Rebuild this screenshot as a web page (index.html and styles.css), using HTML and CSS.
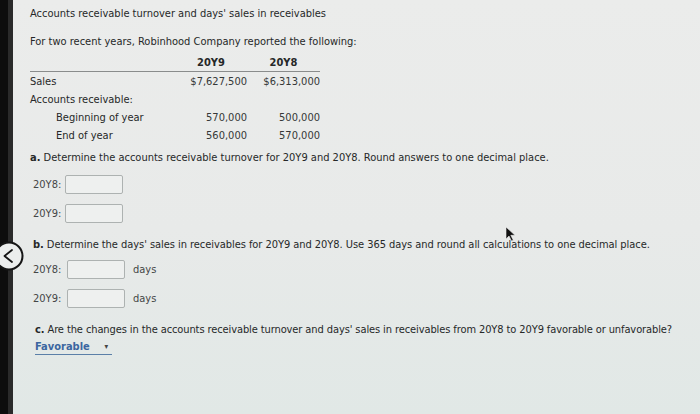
FILE: index.html
```html
<!DOCTYPE html>
<html>
<head>
<meta charset="utf-8">
<link rel="stylesheet" href="styles.css">
</head>
<body>
<div class="screen">
  <div class="bezel"></div>
  <main class="content">
    <h1 class="title">Accounts receivable turnover and days' sales in receivables</h1>
    <p class="intro">For two recent years, Robinhood Company reported the following:</p>
    <div class="table">
      <div class="row head">
        <span class="label"></span>
        <span class="num">20Y9</span>
        <span class="num">20Y8</span>
      </div>
      <div class="row">
        <span class="label">Sales</span>
        <span class="num r">$7,627,500</span>
        <span class="num r">$6,313,000</span>
      </div>
      <div class="row">
        <span class="label">Accounts receivable:</span>
        <span class="num"></span>
        <span class="num"></span>
      </div>
      <div class="row">
        <span class="label indent">Beginning of year</span>
        <span class="num r">570,000</span>
        <span class="num r">500,000</span>
      </div>
      <div class="row">
        <span class="label indent">End of year</span>
        <span class="num r">560,000</span>
        <span class="num r">570,000</span>
      </div>
    </div>

    <p class="q qa"><b>a.</b> Determine the accounts receivable turnover for 20Y9 and 20Y8. Round answers to one decimal place.</p>
    <div class="answer a1"><span class="yr">20Y8:</span><span class="box"></span></div>
    <div class="answer a2"><span class="yr">20Y9:</span><span class="box"></span></div>

    <p class="q qb"><b>b.</b> Determine the days' sales in receivables for 20Y9 and 20Y8. Use 365 days and round all calculations to one decimal place.</p>
    <div class="answer b1"><span class="yr">20Y8:</span><span class="box"></span><span class="unit">days</span></div>
    <div class="answer b2"><span class="yr">20Y9:</span><span class="box"></span><span class="unit">days</span></div>

    <p class="q qc"><b>c.</b> Are the changes in the accounts receivable turnover and days' sales in receivables from 20Y8 to 20Y9 favorable or unfavorable?</p>
    <div class="select"><span class="sel-text">Favorable</span><span class="caret">&#9662;</span></div>
  </main>
  <div class="back-btn">
    <svg width="30" height="30" viewBox="0 0 30 30"><circle cx="15" cy="15" r="13.5" fill="#eceeed" stroke="#151515" stroke-width="2"/><path d="M18 9 L10.5 15 L18 21" fill="none" stroke="#151515" stroke-width="1.8" stroke-linecap="round" stroke-linejoin="round"/></svg>
  </div>
  <div class="cursor">
    <svg width="12" height="16" viewBox="0 0 12 16"><path d="M1 1 L1 13 L4 10 L6.5 15 L8.3 14.2 L5.8 9.3 L10 9.3 Z" fill="#111" stroke="#eee" stroke-width="0.6"/></svg>
  </div>
</div>
</body>
</html>
```

FILE: styles.css
```css
* { box-sizing: border-box; }
html, body { margin: 0; padding: 0; }
body {
  width: 700px;
  height: 414px;
  overflow: hidden;
  font-family: "DejaVu Sans Condensed", "DejaVu Sans", sans-serif;
  font-size: 11px;
  color: #262828;
}
.screen {
  position: relative;
  display: flex;
  width: 700px;
  height: 414px;
  background: linear-gradient(180deg, #ebeceb 0%, #e8eae9 55%, #e1e8e6 100%);
}
.bezel {
  width: 13px;
  flex: none;
  background: linear-gradient(90deg, #0d0d0d 0 8px, #2a2a2a 8px 13px);
}
.content {
  flex: 1;
  padding: 5px 0 0 17px;
}
.title, .intro, .q {
  margin: 0;
  font-size: 11px;
  font-weight: normal;
  line-height: 18px;
}
.intro { margin-top: 10px; }
.table {
  margin-top: 4px;
  width: 290px;
}
.row {
  display: grid;
  grid-template-columns: 145px 72px 73px;
  height: 18px;
  align-items: center;
}
.row.head {
  height: 17px;
  border-bottom: 1.5px solid #8a8c8c;
  font-weight: bold;
  align-items: end;
  padding-bottom: 2px;
}
.head .num { text-align: center; }
.num.r { text-align: right; color: #363838; }
.indent { padding-left: 26px; }
.qa { margin-top: 5px; }
.q b { font-weight: bold; }
.answer {
  display: flex;
  align-items: center;
  height: 19px;
  padding-left: 3px;
}
.a1 { margin-top: 8px; }
.a2 { margin-top: 10px; }
.qb { margin-top: 13px; padding-left: 3px; letter-spacing: -0.05px; }
.b1 { margin-top: 6px; padding-left: 3px; }
.b2 { margin-top: 10px; padding-left: 3px; }
.yr { width: 32px; color: #444646; }
.box {
  width: 58px;
  height: 19px;
  border: 1.5px solid #adb2b1;
  border-radius: 2px;
  background: #eef0ef;
}
.b1 .box, .b2 .box { margin-left: 2px; }
.unit { margin-left: 8px; color: #444646; }
.qc { margin-top: 13px; padding-left: 5px; letter-spacing: -0.1px; }
.select {
  margin-left: 5px;
  display: flex;
  align-items: center;
  justify-content: space-between;
  width: 77px;
  height: 16px;
  border-bottom: 1.5px solid #5b7fa8;
  color: #3b66a0;
  font-weight: bold;
}
.caret { font-size: 8px; color: #444; margin-right: 4px; }
.back-btn {
  position: absolute;
  left: -6px;
  top: 241px;
  width: 30px;
  height: 30px;
}
.cursor {
  position: absolute;
  left: 505px;
  top: 226px;
}
```
